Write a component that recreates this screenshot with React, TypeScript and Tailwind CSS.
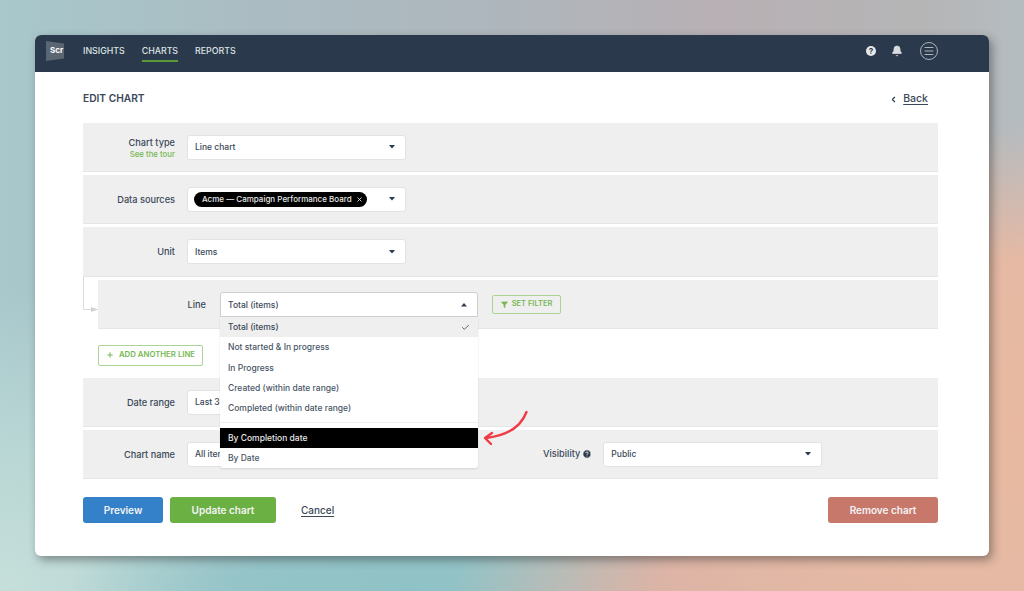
import { Bell, Check, ChevronLeft, CircleHelp, Filter, Menu, Plus, X } from "lucide-react"
import type { ReactNode } from "react"

const font = "font-['Inter','Liberation_Sans',sans-serif]"

function Caret({ up = false }: { up?: boolean }) {
  return (
    <svg width="6" height="4" viewBox="0 0 6 4" className="shrink-0 text-[#2a3a4c]">
      <path d={up ? "M0 3.5 L3 0 L6 3.5 Z" : "M0 0 L6 0 L3 3.5 Z"} fill="currentColor" />
    </svg>
  )
}

function Select({ value, className = "" }: { value: ReactNode; className?: string }) {
  return (
    <div className={`flex h-[25px] items-center justify-between rounded-[3px] border border-[#e2e2e2] bg-white pl-[7px] pr-[10px] text-[8.5px] font-medium text-[#3a4858] ${className}`}>
      <span className="pt-px">{value}</span>
      <Caret />
    </div>
  )
}

function Row({ label, sub, children }: { label: string; sub?: string; children: ReactNode }) {
  return (
    <div className="flex h-[49px] items-center gap-3 border-b border-[#e6e6e6] bg-[#efefef]">
      <div className="w-[92px] pt-px text-right">
        <div className="text-[9.2px] font-medium leading-3 text-[#3a4858]">{label}</div>
        {sub && <div className="text-[7.8px] font-medium leading-[10px] text-[#76b852]">{sub}</div>}
      </div>
      {children}
    </div>
  )
}

function Option({ text, active, selected }: { text: string; active?: boolean; selected?: boolean }) {
  return (
    <div className={`flex h-[20.2px] items-center justify-between pl-2 pr-2 text-[8.5px] font-medium ${active ? "bg-black text-[#e8e8e8]" : selected ? "bg-[#efefef] text-[#3a4858]" : "text-[#4a5666]"}`}>
      <span className="pt-px">{text}</span>
      {selected && <Check size={9} strokeWidth={2} className="text-[#2a3a4c]" />}
    </div>
  )
}

export default function App() {
  return (
    <div className={`relative flex h-[591px] w-[1024px] overflow-hidden bg-[radial-gradient(ellipse_430px_300px_at_100%_72%,#e8b9a0_0%,#e5b9a4_55%,transparent_100%),radial-gradient(ellipse_420px_130px_at_85%_100%,#e0b6a6_0%,#dcb4a6_50%,transparent_100%),radial-gradient(ellipse_340px_110px_at_40%_100%,#8fc2c6_0%,#94c4c8_50%,transparent_100%),radial-gradient(ellipse_320px_300px_at_0%_100%,#c6dfdb_0%,#b8d6d4_50%,transparent_100%),linear-gradient(90deg,#a8c8cc_0%,#aabcc2_25%,#aeb6bc_50%,#b8b0b4_70%,#b5b5b6_90%,#b5bcc0_100%)] pl-[35px] pt-[35px] ${font}`}>
      <div className="h-[521px] w-[954px] overflow-hidden rounded-[6px] bg-white shadow-[3px_4px_10px_rgba(40,40,40,0.45)]">
        {/* Top bar */}
        <header className="flex h-[37px] items-center bg-[#2a3a4c] pb-[5px] pl-[11px] pr-[51px]">
          <div className="relative h-[20px] w-[18px] bg-[#5a6672] [clip-path:polygon(0_0,100%_12%,100%_88%,0_100%)]">
            <span className="absolute left-[4px] top-[4px] text-[8px] font-bold leading-[10px] text-white">Scr</span>
          </div>
          <nav className="ml-[19px] flex items-center gap-[17px] text-[8.8px] font-medium text-[#dfe2e5]">
            <span>INSIGHTS</span>
            <span className="relative">
              CHARTS
              <span className="absolute -bottom-[4px] left-0 right-0 h-[2px] bg-[#5a9a3a]" />
            </span>
            <span>REPORTS</span>
          </nav>
          <div className="ml-auto flex items-center">
            <div className="mr-[15px] flex h-[10px] w-[10px] items-center justify-center rounded-full bg-[#e6e8ea] text-[8px] font-bold leading-none text-[#2a3a4c]">?</div>
            <Bell size={12} fill="#d8dbde" strokeWidth={1.5} className="mr-[17px] text-[#d8dbde]" />
            <div className="flex h-[18px] w-[18px] items-center justify-center rounded-full border border-[#aab2ba]">
              <Menu size={12} strokeWidth={1.5} className="text-[#d8dbde]" />
            </div>
          </div>
        </header>

        <main className="pl-[48px] pr-[51px]">
          <div className="flex h-[51px] items-center justify-between pr-[10px] pt-[3px]">
            <h1 className="text-[10.2px] font-semibold text-[#3a4858]">EDIT CHART</h1>
            <div className="flex items-center gap-[5px] text-[10.5px] font-medium text-[#3a4858]">
              <ChevronLeft size={9} strokeWidth={3} className="text-[#2a3a4c]" />
              <span className="underline underline-offset-2">Back</span>
            </div>
          </div>

          <div className="relative flex flex-col gap-[3px]">
            <Row label="Chart type" sub="See the tour">
              <Select value="Line chart" className="w-[219px]" />
            </Row>
            <Row label="Data sources">
              <Select
                className="w-[219px]"
                value={
                  <span className="-ml-[1px] -mt-px flex h-[15px] w-[173px] items-center gap-[4px] rounded-full bg-black pl-2 text-[8px] text-[#e8e8e8]">
                    Acme — Campaign Performance Board
                    <X size={7} strokeWidth={3} />
                  </span>
                }
              />
            </Row>
            <div className="flex h-[50px] items-center gap-3 border-b border-[#e6e6e6] bg-[#efefef]">
              <div className="w-[92px] pt-px text-right text-[9.2px] font-medium leading-3 text-[#3a4858]">Unit</div>
              <Select value="Items" className="w-[219px]" />
            </div>

            {/* Nested line row */}
            <div className="relative ml-[15px] flex h-[49px] items-center border-b border-[#e6e6e6] bg-[#efefef]">
              <div className="w-[108px] pt-px text-right text-[9.2px] font-medium text-[#3a4858]">Line</div>
              <div className="relative ml-[14px] mt-px w-[258px]">
                <div className="flex h-[25px] items-center justify-between rounded-t-[3px] border border-[#cfcfcf] bg-white pl-[7px] pr-[10px] text-[8.5px] font-medium text-[#3a4858]">
                  <span className="pt-px">Total (items)</span>
                  <Caret up />
                </div>
                {/* Open menu sits over the rows below */}
                <div className="absolute left-0 top-[25px] z-10 w-[258px] rounded-b-[3px] bg-white shadow-[0_1px_2px_rgba(0,0,0,0.12)]">
                  <Option text="Total (items)" selected />
                  <Option text="Not started & In progress" />
                  <Option text="In Progress" />
                  <Option text="Created (within date range)" />
                  <Option text="Completed (within date range)" />
                  <div className="my-[4.5px] h-px bg-[#eeeeee]" />
                  <Option text="By Completion date" active />
                  <Option text="By Date" />
                </div>
              </div>
              <div className="ml-[14px] flex h-[19px] w-[69px] items-center justify-center gap-[4px] rounded-[2px] border border-[#a9d493] text-[7.5px] font-semibold text-[#76b852]">
                <Filter size={7} fill="#76b852" strokeWidth={2} />
                SET FILTER
              </div>
              {/* Connector from the unit row */}
              <div className="absolute -left-[15px] -top-[3px] h-[33px] w-[15px] border-b border-l border-[#dcdcdc]" />
              <svg width="7" height="5" viewBox="0 0 7 5" className="absolute -left-[7px] top-[27px] text-[#d2d2d2]">
                <path d="M0 0 L7 2.5 L0 5 Z" fill="currentColor" />
              </svg>
            </div>

            <div className="flex h-[43px] items-center pt-[3px]">
              <div className="ml-[15px] flex h-[21px] w-[105px] items-center justify-center gap-[5px] rounded-[2px] border border-[#a9d493] text-[7.8px] font-semibold text-[#76b852]">
                <Plus size={8} strokeWidth={3} />
                ADD ANOTHER LINE
              </div>
            </div>

            <Row label="Date range">
              <Select value="Last 30 days" className="w-[219px]" />
            </Row>
            <Row label="Chart name">
              <Select value="All items" className="w-[219px]" />
              <div className="ml-[125px] flex items-center gap-[2px] text-[9.2px] font-medium text-[#3a4858]">
                Visibility
                <CircleHelp size={10} fill="#2a3a4c" className="text-white" />
              </div>
              <Select value="Public" className="-ml-px w-[219px]" />
            </Row>

            {/* Annotation arrow */}
            <svg width="50" height="46" viewBox="0 0 50 46" fill="none" className="absolute left-[398px] top-[287px] z-20 text-[#ee3b45]">
              <path d="M45.5 2 C41 14 31 25 5 28" stroke="currentColor" strokeWidth="2.4" strokeLinecap="round" />
              <path d="M11 23 L4 28 L10 34" stroke="currentColor" strokeWidth="2.4" strokeLinecap="round" strokeLinejoin="round" />
            </svg>
          </div>

          <div className="mt-[18px] flex h-[26px] items-stretch text-[10px] font-semibold text-[#f4f4f4]">
            <div className="flex w-[80px] items-center justify-center rounded-[3px] bg-[#3481c9]">Preview</div>
            <div className="ml-[7px] flex w-[106px] items-center justify-center rounded-[3px] bg-[#6bb043]">Update chart</div>
            <div className="ml-[25px] flex items-center font-medium text-[#3a4858] underline underline-offset-2">Cancel</div>
            <div className="ml-auto flex w-[110px] items-center justify-center rounded-[3px] bg-[#c8786a]">Remove chart</div>
          </div>
        </main>
      </div>
    </div>
  )
}
